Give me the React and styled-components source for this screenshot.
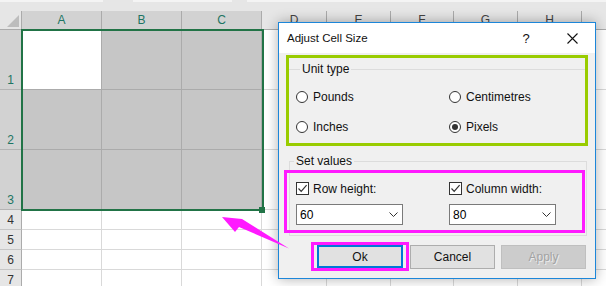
import React from "react";
import styled, { createGlobalStyle } from "styled-components";

const Global = createGlobalStyle`
  html, body { margin: 0; padding: 0; background: #fff; }
  * { box-sizing: border-box; }
`;

const GREEN = "#217346";
const HL_GREEN = "#99cc00";
const MAGENTA = "#ff1aff";

const Page = styled.div`
  position: relative;
  width: 606px;
  height: 286px;
  overflow: hidden;
  background: #fff;
  font-family: "Liberation Sans", Arial, sans-serif;
  color: #111;
`;

const TopBand = styled.div`
  height: 11px;
  background: #e6e6e6;
  display: flex;
  align-items: flex-start;
`;

const BandSegment = styled.div`
  height: 2px;
  width: ${(p) => p.$w}px;
  margin-left: ${(p) => p.$ml || 0}px;
  background: #f4f4f4;
`;

const Sheet = styled.div`
  display: grid;
  grid-template-columns: 22px 80px 80px 80px 65px 64px 63px 64px 64px 64px;
  grid-template-rows: 19px 60px 60px 60px 20px 20px 20px 20px;
  width: 646px;
`;

const Corner = styled.div`
  background: #e6e6e6;
  border-right: 1px solid #ababab;
  border-bottom: 1px solid #ababab;
  display: flex;
  align-items: flex-end;
  justify-content: flex-end;
  padding: 0 2px 2px 0;
`;

const ColHeader = styled.div`
  background: ${(p) => (p.$sel ? "#d2d2d2" : "#e6e6e6")};
  color: ${(p) => (p.$sel ? "#1d7563" : "#444")};
  border-right: 1px solid #ababab;
  border-bottom: 1px solid #ababab;
  display: flex;
  align-items: center;
  justify-content: center;
  font-size: 12px;
`;

const RowHeader = styled.div`
  background: ${(p) => (p.$sel ? "#d2d2d2" : "#e6e6e6")};
  color: ${(p) => (p.$sel ? "#1d7563" : "#333")};
  border-right: 1px solid #ababab;
  border-bottom: 1px solid ${(p) => (p.$sel ? "#b4b4b4" : "#c6c6c6")};
  display: flex;
  align-items: flex-end;
  justify-content: center;
  padding-bottom: 2px;
  font-size: 12px;
  line-height: 14px;
`;

const Cell = styled.div`
  background: ${(p) => (p.$white ? "#fff" : p.$sel ? "#c6c6c6" : "#fff")};
  border-right: 1px solid ${(p) => (p.$sel ? "#ababab" : "#d9d9d9")};
  border-bottom: 1px solid ${(p) => (p.$sel ? "#ababab" : "#d9d9d9")};
`;

const Selection = styled.div`
  position: absolute;
  left: 21px;
  top: 29px;
  width: 243px;
  height: 182px;
  border: 2px solid ${GREEN};
  pointer-events: none;
`;

const Handle = styled.div`
  position: absolute;
  left: 259px;
  top: 207px;
  width: 6px;
  height: 6px;
  background: ${GREEN};
`;

/* ---------- Dialog ---------- */

const Dialog = styled.div`
  position: absolute;
  left: 278px;
  top: 22px;
  width: 318px;
  height: 257px;
  border: 1px solid #1c86d9;
  background: #f0f0f0;
  box-shadow: 0 0 12px rgba(0, 0, 0, 0.32);
  display: flex;
  flex-direction: column;
  font-size: 12px;
  color: #000;
`;

const TitleBar = styled.div`
  height: 30px;
  background: #fff;
  display: flex;
  align-items: center;
  padding-left: 8px;
`;

const Title = styled.div`
  flex: 1;
  font-size: 11.5px;
  color: #111;
`;

const TitleButton = styled.div`
  width: 46px;
  height: 30px;
  display: flex;
  align-items: center;
  justify-content: center;
  font-size: 13px;
  color: #111;
`;

const Body = styled.div`
  flex: 1;
  display: flex;
  flex-direction: column;
  padding: 2px 7px 7px;
`;

const GreenBox = styled.div`
  height: 91px;
  border: 3px solid ${HL_GREEN};
`;

const UnitGroup = styled.fieldset`
  margin: 4px 0 0 0;
  padding: 6px 0 0 7px;
  border: none;
  border-top: 1px solid #dcdcdc;
  min-width: 0;
`;

const Legend = styled.legend`
  margin-left: 4px;
  padding: 0 2px;
  font-size: 12px;
  line-height: 14px;
  color: #111;
`;

const OptionGrid = styled.div`
  display: grid;
  grid-template-columns: 153px 1fr;
  grid-auto-rows: 30px;
`;

const Option = styled.label`
  display: flex;
  align-items: center;
  gap: 5px;
  font-size: 12px;
  color: #111;
`;

const RadioCircle = styled.span`
  width: 12px;
  height: 12px;
  border-radius: 50%;
  border: 1px solid #333;
  background: #fff;
  display: flex;
  align-items: center;
  justify-content: center;
  flex: none;
  &::after {
    content: "";
    width: 6px;
    height: 6px;
    border-radius: 50%;
    background: #333;
    display: ${(p) => (p.$checked ? "block" : "none")};
  }
`;

const ValuesGroup = styled.fieldset`
  margin: 8px 1px 0 3px;
  padding: 0 0 2px 0;
  border: 1px solid #dcdcdc;
  min-width: 0;
`;

const MagentaBox = styled.div`
  margin: 2px 1px 0 -6px;
  height: 63px;
  border: 3px solid ${MAGENTA};
  padding-left: 9px;
  display: grid;
  grid-template-columns: 153px 1fr;
`;

const ValueColumn = styled.div`
  display: flex;
  flex-direction: column;
  padding-top: 9px;
`;

const CheckRow = styled.label`
  display: flex;
  align-items: center;
  gap: 4px;
  height: 13px;
  font-size: 12px;
  color: #111;
`;

const CheckBox = styled.span`
  width: 13px;
  height: 13px;
  border: 1px solid #333;
  background: #fff;
  display: flex;
  align-items: center;
  justify-content: center;
  flex: none;
`;

const Select = styled.div`
  margin-top: 9px;
  width: 107px;
  height: 21px;
  border: 1px solid #7a7a7a;
  background: #fff;
  display: flex;
  align-items: center;
  justify-content: space-between;
  padding: 0 4px 0 3px;
  font-size: 12px;
  color: #000;
`;

const ButtonRow = styled.div`
  margin-top: 6px;
  display: flex;
  justify-content: flex-end;
  align-items: center;
  padding-right: 2px;
`;

const OkHighlight = styled.div`
  height: 29px;
  border: 3px solid ${MAGENTA};
  padding: 0 3px;
  margin-right: 1px;
  display: flex;
  align-items: stretch;
`;

const Button = styled.div`
  width: ${(p) => p.$w}px;
  height: ${(p) => p.$h || 24}px;
  margin-left: ${(p) => p.$ml || 0}px;
  display: flex;
  align-items: center;
  justify-content: center;
  font-size: 12px;
  background: ${(p) => (p.$disabled ? "#cccccc" : "#e1e1e1")};
  border: ${(p) =>
    p.$focus
      ? "2px solid #0078d7"
      : p.$disabled
      ? "1px solid #bfbfbf"
      : "1px solid #adadad"};
  color: ${(p) => (p.$disabled ? "#a3a3a3" : "#111")};
  text-shadow: ${(p) => (p.$disabled ? "1px 1px 0 #ececec" : "none")};
`;

const ArrowLayer = styled.svg`
  position: absolute;
  left: 0;
  top: 0;
  pointer-events: none;
`;

const Check = () => (
  <svg width="11" height="11" viewBox="0 0 11 11">
    <polyline
      points="1.5,5.5 4.2,8.3 9.6,2.2"
      fill="none"
      stroke="#333"
      strokeWidth="1.2"
    />
  </svg>
);

const Chevron = () => (
  <svg width="9" height="5" viewBox="0 0 9 5">
    <polyline points="0.5,0.5 4.5,4.5 8.5,0.5" fill="none" stroke="#333" strokeWidth="1" />
  </svg>
);

const CloseIcon = () => (
  <svg width="11" height="11" viewBox="0 0 11 11">
    <path d="M0.5 0.5 L10.5 10.5 M10.5 0.5 L0.5 10.5" stroke="#111" strokeWidth="1.1" />
  </svg>
);

const cols = ["A", "B", "C", "D", "E", "F", "G", "H", ""];
const rows = [
  { n: "1", sel: true },
  { n: "2", sel: true },
  { n: "3", sel: true },
  { n: "4" },
  { n: "5" },
  { n: "6" },
  { n: "7" },
];

export default function App() {
  return (
    <Page>
      <Global />
      <TopBand>
        <BandSegment $w={103} />
        <BandSegment $w={99} $ml={30} />
        <BandSegment $w={359} $ml={15} />
      </TopBand>
      <Sheet>
        <Corner>
          <svg width="12" height="12" viewBox="0 0 12 12">
            <polygon points="12,0 12,12 0,12" fill="#bdbdbd" />
          </svg>
        </Corner>
        {cols.map((c, i) => (
          <ColHeader key={i} $sel={i < 3}>
            {c}
          </ColHeader>
        ))}
        {rows.map((r, ri) => (
          <React.Fragment key={r.n}>
            <RowHeader $sel={r.sel}>{r.n}</RowHeader>
            {cols.map((c, ci) => (
              <Cell
                key={ci}
                $sel={r.sel && ci < 3}
                $white={ri === 0 && ci === 0}
              />
            ))}
          </React.Fragment>
        ))}
      </Sheet>
      <Selection />
      <Handle />

      <Dialog>
        <TitleBar>
          <Title>Adjust Cell Size</Title>
          <TitleButton>?</TitleButton>
          <TitleButton>
            <CloseIcon />
          </TitleButton>
        </TitleBar>
        <Body>
          <GreenBox>
            <UnitGroup>
              <Legend>Unit type</Legend>
              <OptionGrid>
                <Option>
                  <RadioCircle />
                  Pounds
                </Option>
                <Option>
                  <RadioCircle />
                  Centimetres
                </Option>
                <Option>
                  <RadioCircle />
                  Inches
                </Option>
                <Option>
                  <RadioCircle $checked />
                  Pixels
                </Option>
              </OptionGrid>
            </UnitGroup>
          </GreenBox>
          <ValuesGroup>
            <Legend>Set values</Legend>
            <MagentaBox>
              <ValueColumn>
                <CheckRow>
                  <CheckBox>
                    <Check />
                  </CheckBox>
                  Row height:
                </CheckRow>
                <Select>
                  <span>60</span>
                  <Chevron />
                </Select>
              </ValueColumn>
              <ValueColumn>
                <CheckRow>
                  <CheckBox>
                    <Check />
                  </CheckBox>
                  Column width:
                </CheckRow>
                <Select>
                  <span>80</span>
                  <Chevron />
                </Select>
              </ValueColumn>
            </MagentaBox>
          </ValuesGroup>
          <ButtonRow>
            <OkHighlight>
              <Button $w={86} $h={23} $focus>
                Ok
              </Button>
            </OkHighlight>
            <Button $w={85}>Cancel</Button>
            <Button $w={85} $ml={6} $disabled>
              Apply
            </Button>
          </ButtonRow>
        </Body>
      </Dialog>

      <ArrowLayer width="606" height="286" viewBox="0 0 606 286">
        <polygon
          points="222,217 242,219 289,248.5 239,227 235,232"
          fill={MAGENTA}
        />
      </ArrowLayer>
    </Page>
  );
}
